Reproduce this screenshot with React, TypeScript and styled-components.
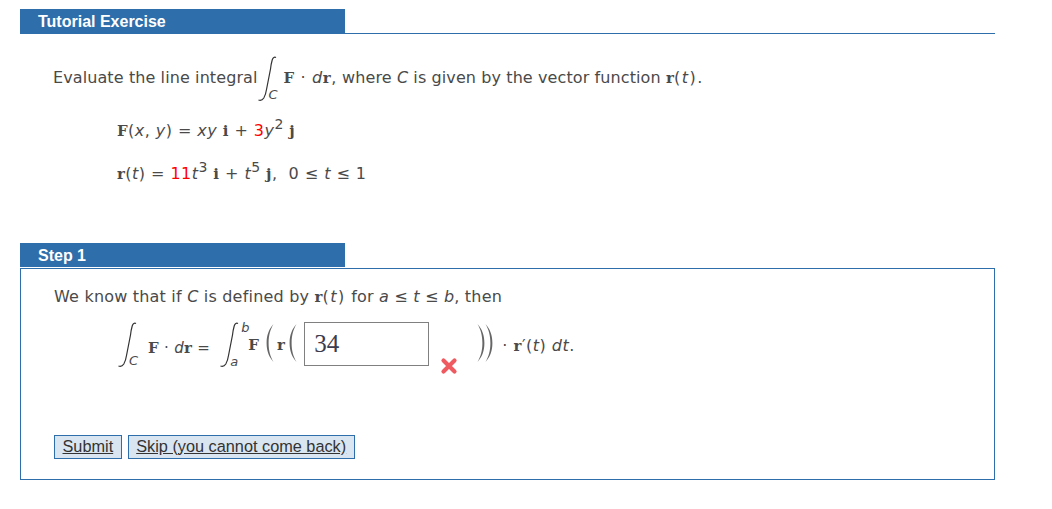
import React from "react";
import styled, { createGlobalStyle } from "styled-components";

const Global = createGlobalStyle`
  html, body { margin: 0; padding: 0; background: #fff; }
  body { font-family: "DejaVu Sans", Verdana, sans-serif; color: #4a4a4a; }
`;

const Page = styled.div`
  width: 975px;
  margin-left: 20px;
  padding-top: 9px;
`;

const Tab = styled.div`
  width: 307px;
  height: 24px;
  padding-left: 18px;
  background: #2e6eaa;
  color: #fff;
  font: bold 16px/25px "Liberation Sans", Arial, sans-serif;
`;

const Rule = styled.div`
  border-top: 1px solid #2e6eaa;
`;

const Section = styled.section`
  padding: 33px 0 0 33px;
  height: 176px;
`;

const Line = styled.div`
  font-size: 16px;
  line-height: 22px;
  white-space: pre;
  letter-spacing: 0.1px;
`;

const MathLine = styled(Line)<{ $top: number }>`
  margin: ${(p) => p.$top}px 0 0 64px;
  letter-spacing: 0.45px;
`;

const B = styled.b`
  font-family: "DejaVu Serif", serif;
  font-weight: bold;
  font-size: 15px;
`;

const I = styled.i`
  font-style: italic;
`;

const Wide = styled.span`
  letter-spacing: 1.500px;
`;

const Spaced = styled.span`
  letter-spacing: 0.6px;
`;

const Red = styled.span`
  color: #f00;
`;

const Sup = styled.sup`
  font-size: 14px;
  line-height: 0;
  vertical-align: 7px;
`;

const IntegralWrap = styled.span<{ $w: number }>`
  position: relative;
  display: inline-block;
  vertical-align: middle;
  flex: none;
  width: ${(p) => p.$w}px;
  height: 46px;
  margin: -12px 0;
  letter-spacing: 0;
`;

const Limit = styled.i<{ $left: number; $top: number }>`
  position: absolute;
  left: ${(p) => p.$left}px;
  top: ${(p) => p.$top}px;
  font-size: 13px;
  line-height: 14px;
  font-style: italic;
`;

const Integral = ({
  w,
  sub,
  sup,
  subLeft = 11,
  subTop = 32,
}: {
  w: number;
  sub: string;
  sup?: string;
  subLeft?: number;
  subTop?: number;
}) => (
  <IntegralWrap $w={w}>
    <svg width="20" height="46" viewBox="0 0 20 46">
      <path
        d="M18 1.500C16.500 .6 15 1.500 14.200 4 13.500 6.500 12.900 9 12.500 13L8.600 33C8 37 7 40 5.800 42 4.500 44 2.500 44.800 .5 44"
        fill="none"
        stroke="#333"
        strokeWidth="1.200"
      />
    </svg>
    <Limit $left={subLeft} $top={subTop}>{sub}</Limit>
    {sup && <Limit $left={21} $top={-1}>{sup}</Limit>}
  </IntegralWrap>
);

const Box = styled.div`
  height: 210px;
  margin-top: 1px;
  border: 1px solid #2e6eaa;
  padding: 0 0 0 33px;
`;

const Intro = styled(Line)`
  margin-top: 17px;
  letter-spacing: 0.2px;
`;

const Equation = styled.div`
  display: flex;
  align-items: center;
  margin: 14px 0 0 64px;
  height: 46px;
  font-size: 15px;
  white-space: pre;
`;

const Run = styled.span<{ $gap?: number; $wide?: boolean; $drop?: number }>`
  margin-left: ${(p) => p.$gap ?? 0}px;
  margin-top: ${(p) => p.$drop ?? 0}px;
  font-size: ${(p) => (p.$wide ? 16 : 15)}px;
  letter-spacing: ${(p) => (p.$wide ? 0.5 : 0.3)}px;
`;

const Field = styled.input`
  box-sizing: border-box;
  flex: none;
  width: 125px;
  height: 44px;
  margin: -2px 0 0 7px;
  padding: 0 9px;
  border: 1px solid #808080;
  background: #fff;
  color: #3c3c4c;
  font-family: "Liberation Serif", "Times New Roman", serif;
  font-size: 25px;
  outline: none;
`;

const WrongMark = styled.svg`
  flex: none;
  align-self: flex-end;
  margin: 0 19px -7px 11px;
`;

const Buttons = styled.div`
  display: flex;
  gap: 6px;
  margin-top: 67px;
`;

const Btn = styled.button`
  box-sizing: border-box;
  height: 24px;
  padding: 0 7.500px 2px;
  border: 1px solid #2e6eaa;
  background: #d9e5f0;
  color: #333;
  font: 16.300px "Liberation Sans", Arial, sans-serif;
  text-decoration: underline;
`;

const ParenSvg = styled.svg<{ $gap: number }>`
  flex: none;
  margin-left: ${(p) => p.$gap}px;
  margin-top: -4px;
`;

const Paren = ({ flip, gap = 0 }: { flip?: boolean; gap?: number }) => (
  <ParenSvg $gap={gap} width="8" height="40" viewBox="0 0 8 40">
    <path
      d="M7.500 1C3 6 .6 12 .6 20s2.400 14 6.900 19C4.400 33.500 2.600 28 2.600 20S4.400 6.500 7.500 1z"
      fill="#666"
      transform={flip ? "translate(8 0) scale(-1 1)" : undefined}
    />
  </ParenSvg>
);

export default function App() {
  return (
    <Page>
      <Global />
      <Tab>Tutorial Exercise</Tab>
      <Rule />
      <Section>
        <Line>
          Evaluate the line integral
          <Integral w={26} sub="C" />
          <Spaced><B>F</B> · <I>d</I><B>r</B>,</Spaced> where <I>C</I> is given by the vector function <B>r</B><Wide>(<I>t</I>).</Wide>
        </Line>
        <MathLine $top={30}>
          <B>F</B>(<I>x</I>, <I>y</I>) = <I>xy</I> <B>i</B> + <Red>3</Red><I>y</I><Sup>2</Sup> <B>j</B>
        </MathLine>
        <MathLine $top={21}>
          <B>r</B>(<I>t</I>) = <Red>11</Red><I>t</I><Sup>3</Sup> <B>i</B> + <I>t</I><Sup>5</Sup> <B>j</B>,  0 ≤ <I>t</I> ≤ 1
        </MathLine>
      </Section>
      <div>
        <Tab>Step 1</Tab>
        <Box>
          <Intro>
            We know that if <I>C</I> is defined by <B>r</B><Wide>(<I>t</I>)</Wide> for <I>a</I> ≤ <I>t</I> ≤ <I>b</I>, then
          </Intro>
          <Equation>
            <Integral w={30} sub="C" />
            <Run $drop={6}><B>F</B> · <I>d</I><B>r</B> =</Run>
            <Run $gap={10}><Integral w={28} sub="a" sup="b" subLeft={10} subTop={33} /></Run>
            <Run><B>F</B></Run>
            <Paren gap={7} />
            <Run $gap={3}><B>r</B></Run>
            <Paren gap={4} />
            <Field defaultValue="34" aria-label="answer" />
            <WrongMark width="18" height="18" viewBox="0 0 18 18">
              <path d="M3.500 3.500l11 11M14.500 3.500l-11 11" stroke="#ee5a60" strokeWidth="4.200" strokeLinecap="round" />
            </WrongMark>
            <Paren flip />
            <Paren flip />
            <Run $gap={9} $wide>· <B>r</B>′(<I>t</I>) <I>dt</I>.</Run>
          </Equation>
          <Buttons>
            <Btn>Submit</Btn>
            <Btn>Skip (you cannot come back)</Btn>
          </Buttons>
        </Box>
      </div>
    </Page>
  );
}
